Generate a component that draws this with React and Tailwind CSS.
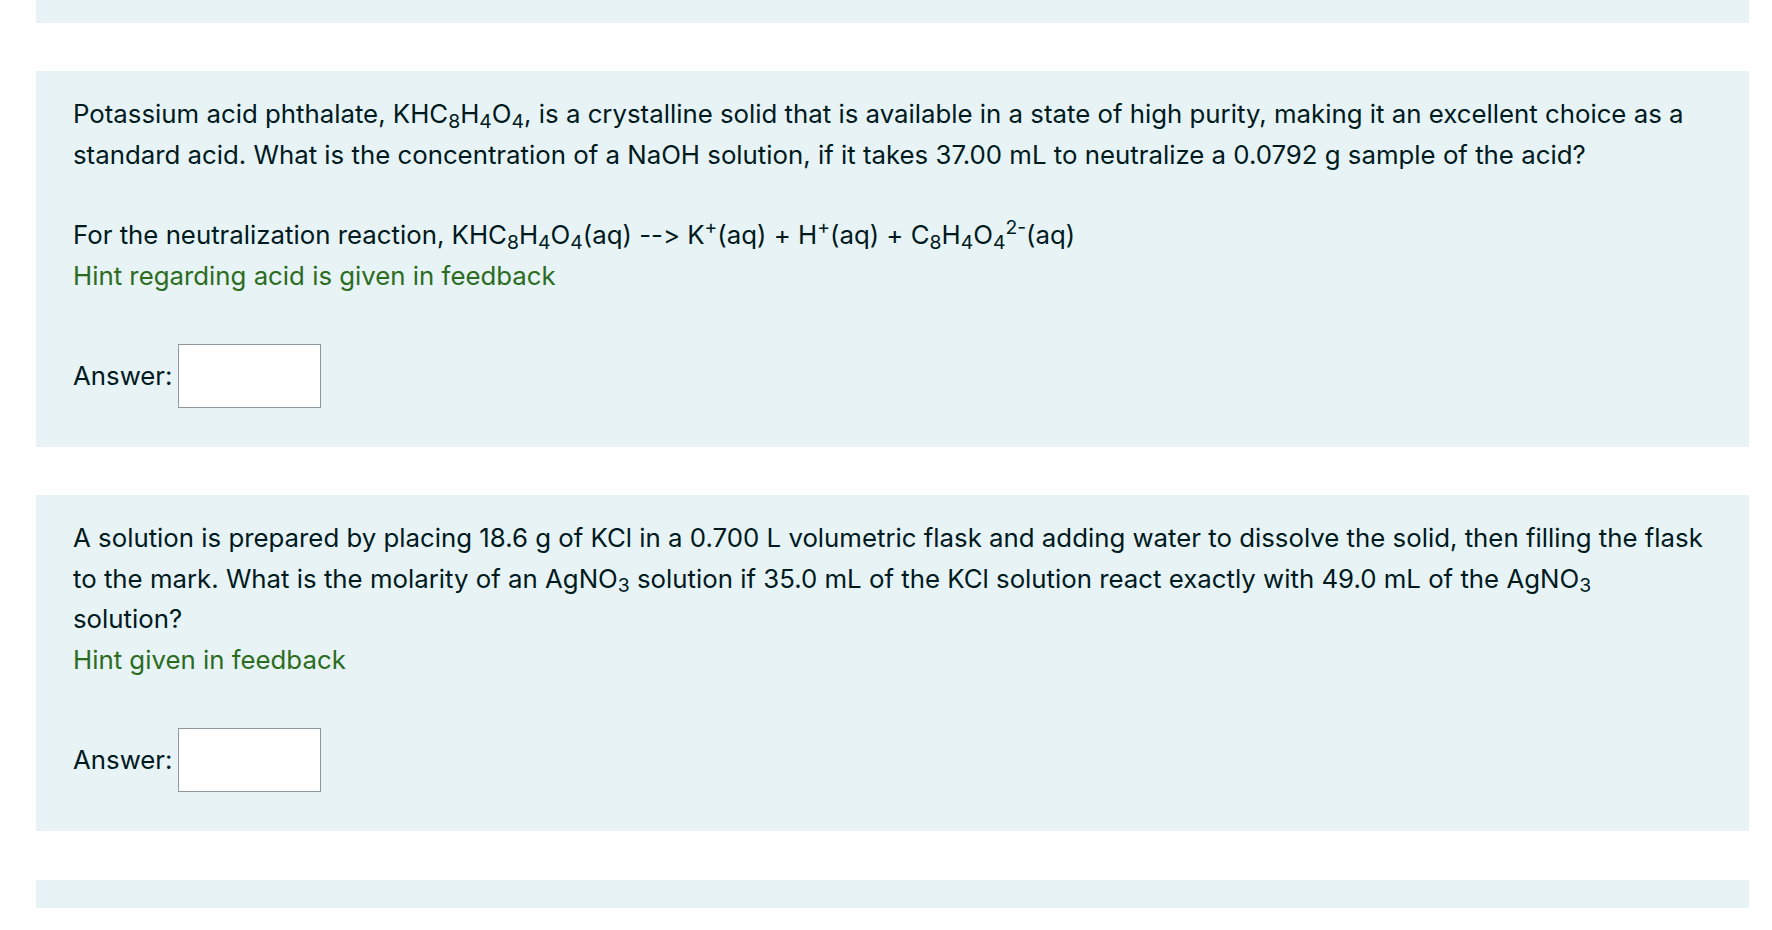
import React from 'react';

const panel = 'ml-[36px] w-[1713px] bg-[#e7f3f5]';

const AnswerRow = () => (
  <div className="mt-[48px] flex items-center gap-[6px]">
    <span>Answer:</span>
    <input
      type="text"
      className="h-[64px] w-[143px] border border-[#8f959e] bg-white px-3 outline-none"
    />
  </div>
);

export default function App() {
  return (
    <div
      className="min-h-screen bg-white text-[25.8px] leading-[40.5px] text-[#001a1e] [font-feature-settings:'calt'_0] [font-variant-ligatures:none]"
      style={{ fontFamily: 'Inter, "Noto Sans", sans-serif' }}
    >
      <div className={`${panel} h-[23px]`} />

      <div className={`${panel} mt-[48px] pl-[37px] pr-[44px] pt-[23px] pb-[39px]`}>
        <p className="mb-[40px]">
          Potassium acid phthalate, KHC<sub>8</sub>H<sub>4</sub>O<sub>4</sub>, is a crystalline solid that is available in a state of high purity, making it an excellent choice as a standard acid. What is the concentration of a NaOH solution, if it takes 37.00 mL to neutralize a 0.0792 g sample of the acid?
        </p>
        <p>
          For the neutralization reaction, KHC<sub>8</sub>H<sub>4</sub>O<sub>4</sub>(aq) --&gt; K<sup>+</sup>(aq) + H<sup>+</sup>(aq) + C<sub>8</sub>H<sub>4</sub>O<sub>4</sub><sup>2-</sup>(aq)
        </p>
        <p className="text-[#2b6c1f]">Hint regarding acid is given in feedback</p>
        <AnswerRow />
      </div>

      <div className={`${panel} mt-[48px] pl-[37px] pr-[44px] pt-[23px] pb-[39px]`}>
        <p>
          A solution is prepared by placing 18.6 g of KCl in a 0.700 L volumetric flask and adding water to dissolve the solid, then filling the flask to the mark. What is the molarity of an AgNO<sub>3</sub> solution if 35.0 mL of the KCl solution react exactly with 49.0 mL of the AgNO<sub>3</sub> solution?
        </p>
        <p className="text-[#2b6c1f]">Hint given in feedback</p>
        <AnswerRow />
      </div>

      <div className={`${panel} mt-[49px] h-[28px]`} />
    </div>
  );
}
